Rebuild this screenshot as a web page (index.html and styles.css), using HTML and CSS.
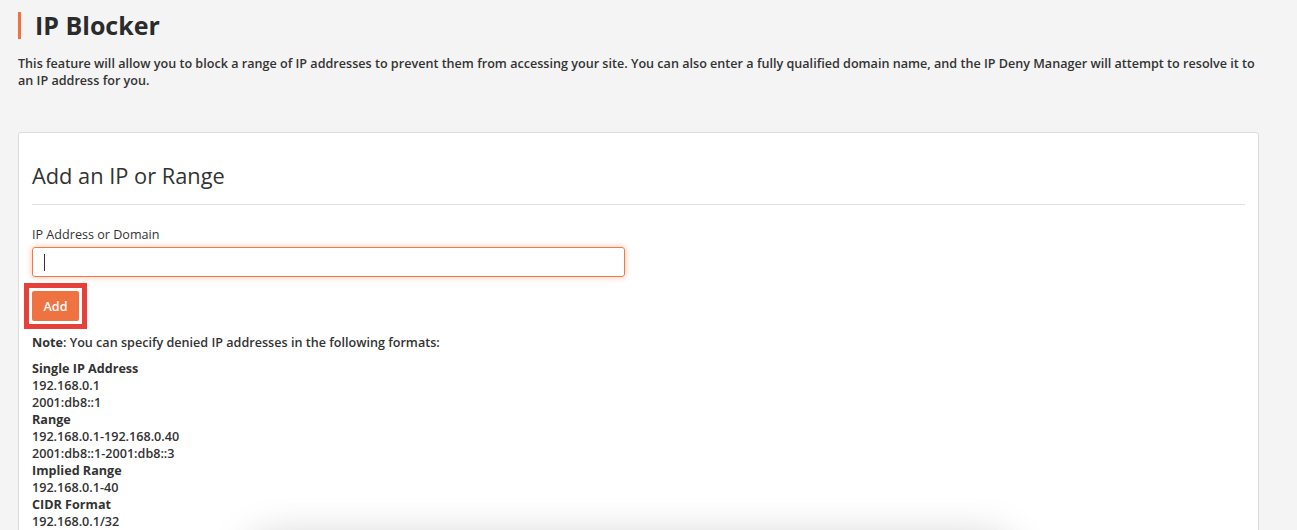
FILE: index.html
```html
<!DOCTYPE html>
<html>
<head>
<meta charset="utf-8">
<link rel="stylesheet" href="styles.css">
</head>
<body>
<div class="page">
  <h1 class="title">IP Blocker</h1>
  <p class="desc">This feature will allow you to block a range of IP addresses to prevent them from accessing your site. You can also enter a fully qualified domain name, and the IP Deny Manager will attempt to resolve it to an IP address for you.</p>
  <div class="card">
    <h2 class="card-title">Add an IP or Range</h2>
    <label class="label">IP Address or Domain</label>
    <div class="input"><span class="caret"></span></div>
    <div class="highlight"><button class="btn">Add</button></div>
    <p class="note"><b>Note</b>: You can specify denied IP addresses in the following formats:</p>
    <div class="formats">
      <b>Single IP Address</b>
      <span>192.168.0.1</span>
      <span>2001:db8::1</span>
      <b>Range</b>
      <span>192.168.0.1-192.168.0.40</span>
      <span>2001:db8::1-2001:db8::3</span>
      <b>Implied Range</b>
      <span>192.168.0.1-40</span>
      <b>CIDR Format</b>
      <span>192.168.0.1/32</span>
    </div>
  </div>
</div>
<div class="floater"></div>
</body>
</html>
```
FILE: styles.css
```css
html, body {
  margin: 0;
  padding: 0;
  background: #f4f4f4;
  font-family: "Open Sans", "Liberation Sans", sans-serif;
  color: #333;
  overflow: hidden;
  height: 530px;
}
.page {
  padding: 0 38px 0 18px;
}
.title {
  margin: 12px 0 0 0;
  border-left: 3px solid #f0703e;
  padding-left: 14px;
  font-size: 25px;
  font-weight: 700;
  line-height: 27px;
  color: #2b2b2b;
}
.desc {
  margin: 16px 0 0 0;
  font-size: 12.6px;
  font-weight: 600;
  line-height: 17px;
  color: #333;
}
.card {
  margin-top: 43px;
  background: #fff;
  border: 1px solid #dcdcdc;
  border-radius: 3px;
  padding: 28px 13px 0 13px;
  height: 500px;
}
.card-title {
  margin: 0;
  font-size: 21.8px;
  font-weight: 400;
  line-height: 30px;
  color: #333;
  padding-bottom: 13px;
  border-bottom: 1px solid #dde1e3;
}
.label {
  display: block;
  margin-top: 21px;
  font-size: 12.6px;
  line-height: 17px;
  color: #333;
}
.input {
  margin-top: 4px;
  width: 580px;
  height: 28px;
  border: 1px solid #f07a45;
  border-radius: 3px;
  box-shadow: 0 0 6px rgba(240, 112, 62, 0.45);
  display: flex;
  align-items: center;
  padding-left: 11px;
  box-sizing: content-box;
}
.caret {
  width: 1px;
  height: 17px;
  background: #333;
}
.highlight {
  margin: 6px 0 0 -8px;
  width: 47px;
  padding: 3px;
  border: 5px solid #e5403a;
  background: #fff;
}
.btn {
  display: block;
  width: 47px;
  height: 30px;
  border: none;
  border-radius: 2px;
  background: #ee7340;
  color: #fff;
  font-family: "Open Sans", "Liberation Sans", sans-serif;
  font-size: 12.6px;
  font-weight: 600;
  padding: 0;
}
.note {
  margin: 5px 0 0 0;
  font-size: 12.6px;
  line-height: 17px;
  font-weight: 600;
  color: #333;
}
.note b {
  font-weight: 700;
}
.formats {
  margin-top: 9px;
  display: flex;
  flex-direction: column;
  font-size: 12.6px;
  line-height: 17px;
  font-weight: 600;
  color: #333;
}
.formats b {
  font-weight: 700;
}
.floater {
  position: fixed;
  left: 245px;
  width: 770px;
  top: 540px;
  height: 60px;
  border-radius: 30px;
  background: #fff;
  box-shadow: 0 -4px 40px rgba(0, 0, 0, 0.18);
}
```
